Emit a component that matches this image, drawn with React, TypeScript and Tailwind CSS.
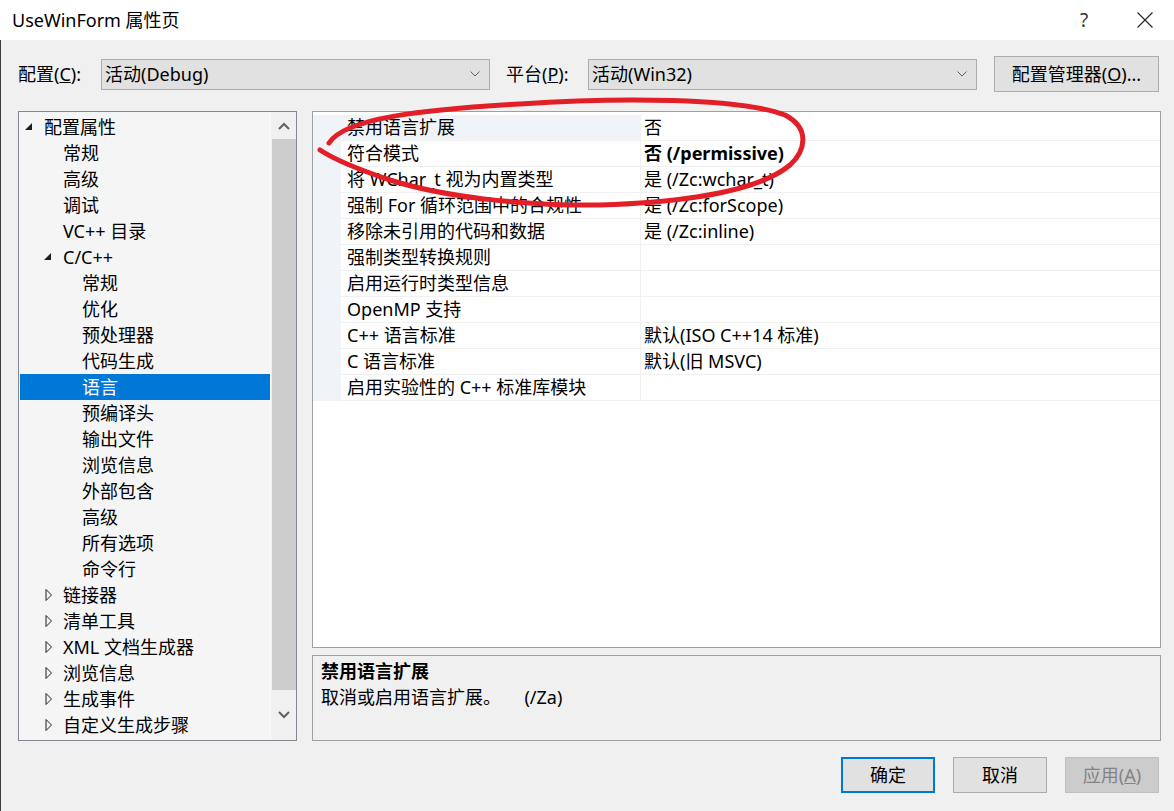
import React from "react";

type TreeItem = {
  label: string;
  level: number;
  toggle?: "open" | "closed";
  selected?: boolean;
};

const tree: TreeItem[] = [
  { label: "配置属性", level: 0, toggle: "open" },
  { label: "常规", level: 1 },
  { label: "高级", level: 1 },
  { label: "调试", level: 1 },
  { label: "VC++ 目录", level: 1 },
  { label: "C/C++", level: 1, toggle: "open" },
  { label: "常规", level: 2 },
  { label: "优化", level: 2 },
  { label: "预处理器", level: 2 },
  { label: "代码生成", level: 2 },
  { label: "语言", level: 2, selected: true },
  { label: "预编译头", level: 2 },
  { label: "输出文件", level: 2 },
  { label: "浏览信息", level: 2 },
  { label: "外部包含", level: 2 },
  { label: "高级", level: 2 },
  { label: "所有选项", level: 2 },
  { label: "命令行", level: 2 },
  { label: "链接器", level: 1, toggle: "closed" },
  { label: "清单工具", level: 1, toggle: "closed" },
  { label: "XML 文档生成器", level: 1, toggle: "closed" },
  { label: "浏览信息", level: 1, toggle: "closed" },
  { label: "生成事件", level: 1, toggle: "closed" },
  { label: "自定义生成步骤", level: 1, toggle: "closed" },
];

const props = [
  { name: "禁用语言扩展", value: "否", selected: true },
  { name: "符合模式", value: "否 (/permissive)", bold: true },
  { name: "将 WChar_t 视为内置类型", value: "是 (/Zc:wchar_t)" },
  { name: "强制 For 循环范围中的合规性", value: "是 (/Zc:forScope)" },
  { name: "移除未引用的代码和数据", value: "是 (/Zc:inline)" },
  { name: "强制类型转换规则", value: "" },
  { name: "启用运行时类型信息", value: "" },
  { name: "OpenMP 支持", value: "" },
  { name: "C++ 语言标准", value: "默认(ISO C++14 标准)" },
  { name: "C 语言标准", value: "默认(旧 MSVC)" },
  { name: "启用实验性的 C++ 标准库模块", value: "" },
];

const indent = ["pl-[5px]", "pl-[24px]", "pl-[43px]"];

function Chevron() {
  return (
    <svg width="10" height="6" viewBox="0 0 10 6" className="shrink-0">
      <path d="M0.5 0.5 L5 5 L9.5 0.5" fill="none" stroke="#606060" strokeWidth="1" />
    </svg>
  );
}

function Combo({ text }: { text: string }) {
  return (
    <div className="w-[389px] h-[31px] shrink-0 bg-[#e1e1e1] border border-[#adadad] flex items-center justify-between pl-[3px] pr-[9px]">
      <span>{text}</span>
      <Chevron />
    </div>
  );
}

function Toggle({ kind }: { kind?: "open" | "closed" }) {
  if (!kind) return <span className="w-[19px] shrink-0" />;
  return (
    <span className="w-[19px] shrink-0 flex items-center">
      {kind === "open" ? (
        <svg width="8" height="8" viewBox="0 0 8 8">
          <path d="M7 0 L7 7 L0 7 Z" fill="#1e1e1e" />
        </svg>
      ) : (
        <svg width="8" height="12" viewBox="0 0 8 12" className="ml-[1px]">
          <path d="M1 0.5 L6.5 6 L1 11.5 Z" fill="none" stroke="#1e1e1e" strokeWidth="1" />
        </svg>
      )}
    </span>
  );
}

function Btn({
  children,
  primary,
  disabled,
}: {
  children: React.ReactNode;
  primary?: boolean;
  disabled?: boolean;
}) {
  return (
    <div
      className={
        primary
          ? "w-[94px] h-[36px] bg-[#e1e1e1] border-2 border-[#0078d7] flex items-center justify-center"
          : disabled
          ? "w-[94px] h-[36px] bg-[#cccccc] border border-[#bfbfbf] text-[#838383] flex items-center justify-center"
          : "w-[94px] h-[36px] bg-[#e1e1e1] border border-[#adadad] flex items-center justify-center"
      }
    >
      {children}
    </div>
  );
}

export default function App() {
  return (
    <div
      className="relative w-[1174px] h-[811px] bg-[#f0f0f0] text-[18px] text-black flex flex-col overflow-hidden"
      style={{ fontFamily: '"Noto Sans", "Noto Sans CJK SC", sans-serif' }}
    >
      {/* title bar */}
      <div className="h-[40px] bg-white flex items-center pl-[12px] shrink-0">
        <span className="flex-1">UseWinForm 属性页</span>
        <span className="w-[40px] text-center text-[19px] text-[#333] mr-[33px]">?</span>
        <svg width="16" height="16" viewBox="0 0 16 16" className="mr-[21px]">
          <path d="M0.5 0.5 L15.5 15.5 M15.5 0.5 L0.5 15.5" stroke="#222" strokeWidth="1.1" />
        </svg>
      </div>

      <div className="flex-1 flex flex-col border-l border-[#3c3c3c]">
        {/* config row */}
        <div className="h-[36px] mt-[16px] flex items-center pl-[17px]">
          <span className="w-[83px] shrink-0">
            配置(<u>C</u>):
          </span>
          <Combo text="活动(Debug)" />
          <span className="w-[98px] shrink-0 pl-[16px]">
            平台(<u>P</u>):
          </span>
          <Combo text="活动(Win32)" />
          <div className="ml-[17px] w-[165px] shrink-0 h-[36px] bg-[#e1e1e1] border border-[#adadad] flex items-center justify-center">
            配置管理器(<u>O</u>)...
          </div>
        </div>

        {/* main */}
        <div className="flex mt-[19px] pl-[17px] gap-[15px]">
          {/* tree */}
          <div className="w-[279px] h-[630px] border border-[#828790] bg-[#f5f5f5] flex">
            <div className="flex-1 pt-[2px] pl-[1px]">
              {tree.map((t, i) => (
                <div
                  key={i}
                  className={
                    "h-[26px] flex items-center " +
                    indent[t.level] +
                    (t.selected ? " bg-[#0078d7] text-white" : "")
                  }
                >
                  <Toggle kind={t.toggle} />
                  <span className="whitespace-nowrap">{t.label}</span>
                </div>
              ))}
            </div>
            <div className="w-[26px] flex flex-col items-center border-l border-[#fafafa] bg-[#f0f0f0]">
              <div className="h-[27px] flex items-center justify-center">
                <svg width="12" height="8" viewBox="0 0 12 8">
                  <path d="M1 7 L6 2 L11 7" fill="none" stroke="#606060" strokeWidth="2" />
                </svg>
              </div>
              <div className="w-[24px] h-[551px] bg-[#cdcdcd]" />
              <div className="flex-1 flex items-center justify-center">
                <svg width="12" height="8" viewBox="0 0 12 8">
                  <path d="M1 1 L6 6 L11 1" fill="none" stroke="#606060" strokeWidth="2" />
                </svg>
              </div>
            </div>
          </div>

          {/* right column */}
          <div className="w-[849px] flex flex-col gap-[7px]">
            <div className="h-[537px] border border-[#a0a0a0] bg-white pt-[3px]">
              {props.map((p, i) => (
                <div key={i} className="h-[26px] flex">
                  <div className="w-[28px] bg-[#f0f4f9]" />
                  <div
                    className={
                      "w-[300px] pl-[6px] flex items-center border-b border-r border-[#f0f0f0] whitespace-nowrap " +
                      (p.selected ? "bg-[#f0f4f9]" : "")
                    }
                  >
                    {p.name}
                  </div>
                  <div
                    className={
                      "flex-1 pl-[3px] flex items-center border-b border-[#f0f0f0] whitespace-nowrap " +
                      (p.bold ? "font-bold" : "")
                    }
                  >
                    {p.value}
                  </div>
                </div>
              ))}
            </div>
            <div className="h-[86px] border border-[#a0a0a0] bg-[#f0f0f0] pl-[8px] pt-[2px]">
              <div className="h-[26px] flex items-center font-bold">禁用语言扩展</div>
              <div className="h-[26px] flex items-center whitespace-pre">取消或启用语言扩展。     (/Za)</div>
            </div>
          </div>
        </div>

        {/* buttons */}
        <div className="flex justify-end gap-[18px] mt-[16px] pr-[15px]">
          <Btn primary>确定</Btn>
          <Btn>取消</Btn>
          <Btn disabled>
            应用(<u>A</u>)
          </Btn>
        </div>
      </div>

      {/* red hand-drawn annotation */}
      <svg
        className="absolute left-0 top-0 pointer-events-none"
        width="1174"
        height="811"
        viewBox="0 0 1174 811"
      >
        <path
          d="M329 143 C 345 118, 420 110, 520 104 C 620 97, 740 98, 785 115 C 810 128, 806 150, 790 165 C 760 190, 690 202, 600 205 C 520 206, 440 196, 390 180 C 360 170, 335 160, 320 150"
          fill="none"
          stroke="#e21f26"
          strokeWidth="5"
          strokeLinecap="round"
        />
      </svg>
    </div>
  );
}
